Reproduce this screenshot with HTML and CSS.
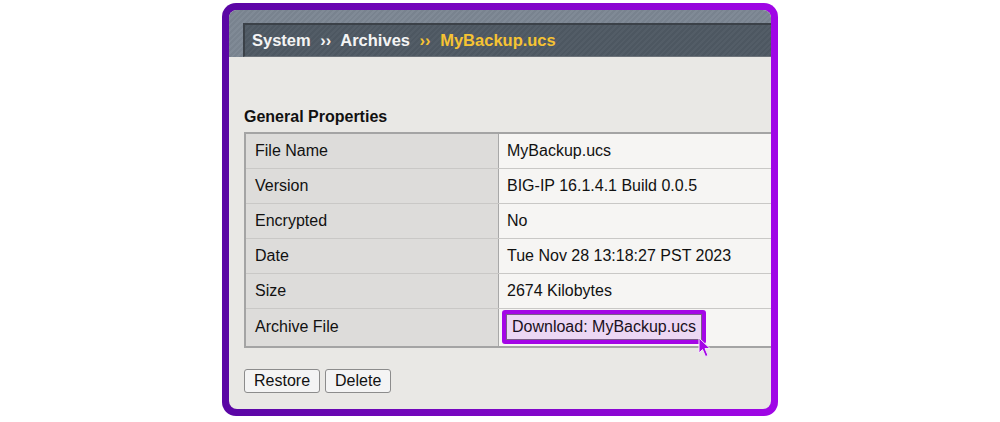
FILE: index.html
```html
<html>

<head>
	<link rel="stylesheet" href="styles.css">
</head>

<body>
	<div class="frame">
		<div class="panel">
			<header class="pageHeader">
				<div class="crumbBar">
					<span>System</span>
					<span class="sep">››</span>
					<span>Archives</span>
					<span class="sep current">››</span>
					<span class="current">MyBackup.ucs</span>
				</div>
			</header>
			<div class="content">
				<h3>General Properties</h3>
				<table class="props">
					<tr>
						<td class="label">File Name</td>
						<td class="value">MyBackup.ucs</td>
					</tr>
					<tr>
						<td class="label">Version</td>
						<td class="value">BIG-IP 16.1.4.1 Build 0.0.5</td>
					</tr>
					<tr>
						<td class="label">Encrypted</td>
						<td class="value">No</td>
					</tr>
					<tr>
						<td class="label">Date</td>
						<td class="value">Tue Nov 28 13:18:27 PST 2023</td>
					</tr>
					<tr>
						<td class="label">Size</td>
						<td class="value">2674 Kilobytes</td>
					</tr>
					<tr class="archiveRow">
						<td class="label">Archive File</td>
						<td class="value">
							<span class="download"><span class="downloadLink">Download: MyBackup.ucs</span></span>
							<svg class="cursor" width="14" height="22" viewBox="0 0 14 22">
								<path d="M1 1 L1 16 L4.5 12.5 L7.5 19.5 L10 18.5 L7 11.5 L12 11.5 Z" fill="#a406e6" stroke="#f3e6f8" stroke-width="1" />
							</svg>
						</td>
					</tr>
				</table>
				<div class="actions">
					<button class="button">Restore</button>
					<button class="button">Delete</button>
				</div>
			</div>
		</div>
	</div>
</body>

</html>
```

FILE: styles.css
```css
body {
	margin: 0;
	background-color: white;
	font-family: "Liberation Sans", Arial, sans-serif;
}

.frame {
	width: 556px;
	height: 413px;
	box-sizing: border-box;
	margin: 3px auto 0;
	padding: 7px;

	border-radius: 14px;
	background: linear-gradient(to right, #5a06a4, #a006e6);
}

.panel {
	height: 399px;
	overflow: hidden;

	border-radius: 8px;
	background-color: #e9e8e5;
}

.pageHeader {
	height: 47px;
	box-sizing: border-box;
	padding: 13px 0 0 14px;

	background: repeating-linear-gradient(135deg, #79838f 0 2px, #808a96 2px 4px);
}

.crumbBar {
	height: 34px;
	box-sizing: border-box;
	padding-left: 7px;

	border-top: 2px solid #3b4148;
	border-left: 2px solid #3b4148;
	border-bottom: 1px solid #6d737a;
	background: repeating-linear-gradient(135deg, #4d5761 0 2px, #535d67 2px 4px);

	font-size: 16.5px;
	font-weight: bold;
	line-height: 31px;
	color: #f4f4f4;
	white-space: nowrap;
}

.sep {
	margin: 0 5px;
}

.current {
	color: #f6c333;
}

.content {
	padding: 50px 0 0 15px;
}

h3 {
	margin: 0 0 6px;
	font-size: 16px;
	line-height: 19px;
	color: #111;
}

.props {
	width: 540px;
	border-collapse: collapse;
	border: 2px solid #a4a4a4;

	font-size: 16px;
	color: #111;
}

.props td {
	height: 35px;
	padding: 0 0 0 9px;
	border: 1px solid #c9c8c6;
}

.label {
	width: 243px;
	background-color: #dddcda;
	border-right: 1px solid #a8a8a8 !important;
}

.value {
	background-color: #f6f5f3;
	position: relative;
}

.props .value {
	padding-left: 8px;
}

.archiveRow td {
	height: 39px;
}

.props .archiveRow .value {
	padding-left: 3px;
}

.download {
	display: inline-block;
	padding: 4px;
	border-radius: 3px;
	background-color: #a406e6;
}

.downloadLink {
	display: inline-block;
	padding: 0 5px;
	height: 24px;

	border: 1px solid #7a5d88;
	background-color: #ecd7f4;

	line-height: 24px;
	color: #1a1020;
}

.cursor {
	position: absolute;
	left: 199px;
	top: 28px;
}

.actions {
	display: flex;
	gap: 5px;
	margin-top: 21px;
}

.button {
	height: 24px;
	padding: 0 9px;

	border: 1px solid #8c8c8c;
	border-radius: 3px;
	background-color: #f4f4f4;

	font-family: "Liberation Sans", Arial, sans-serif;
	font-size: 16px;
	color: #111;
}
```
